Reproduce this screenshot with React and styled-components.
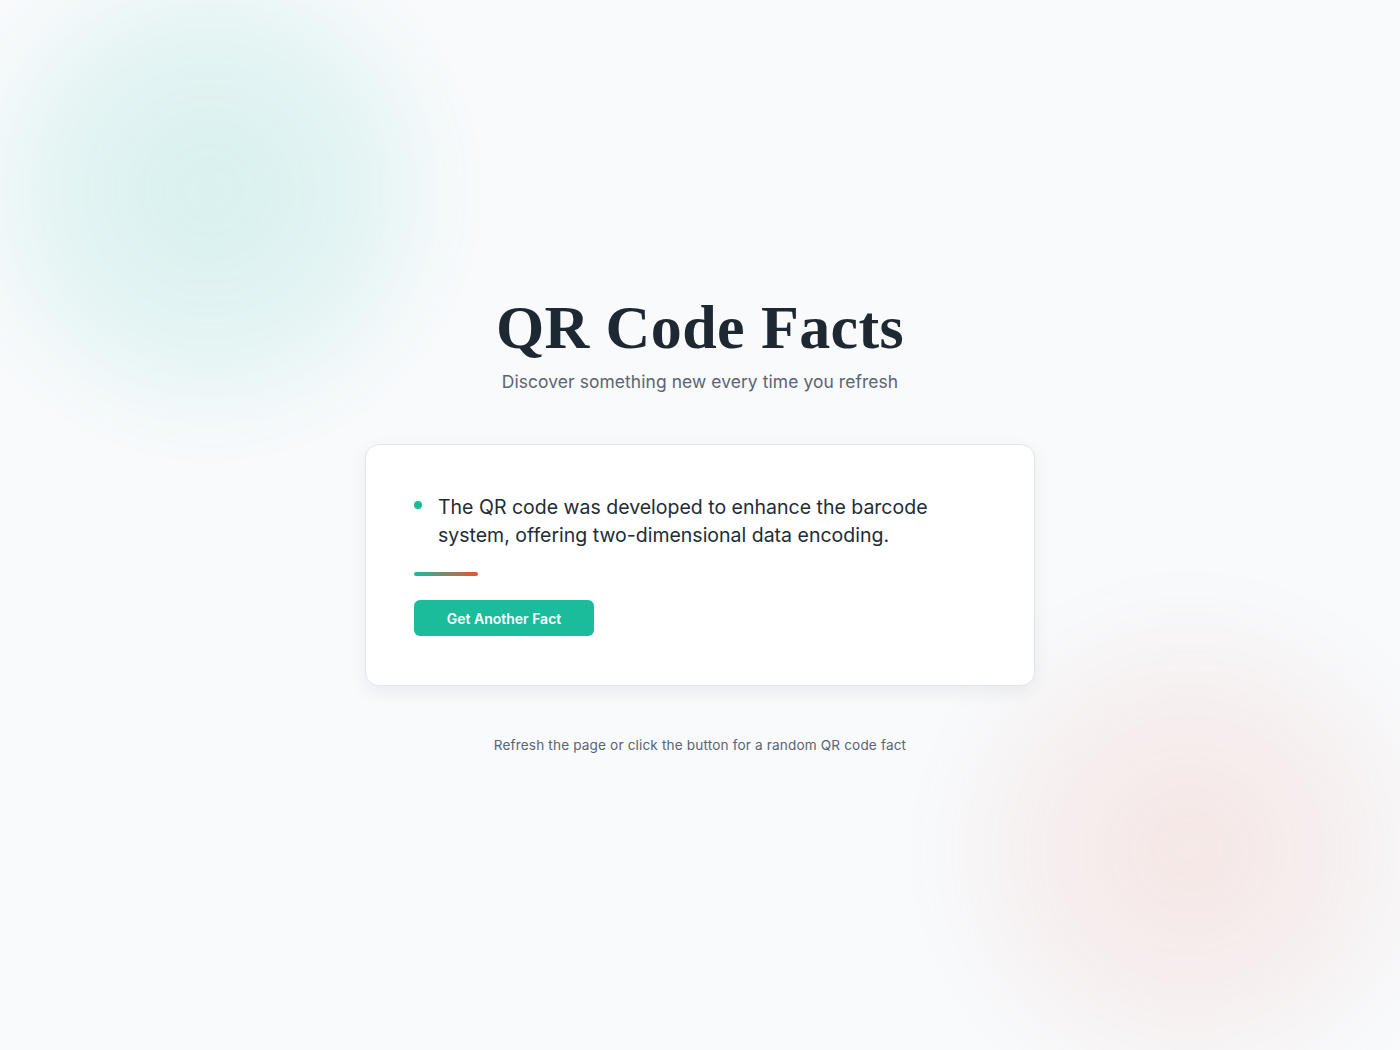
import React, { useState } from "react";
import styled, { createGlobalStyle } from "styled-components";

const facts = [
  "The QR code was developed to enhance the barcode system, offering two-dimensional data encoding.",
  "QR stands for Quick Response, a name chosen for how fast the code can be read.",
  "A single QR code can hold up to 7,089 numeric characters.",
  "QR codes can still be read when up to 30% of the code is damaged.",
];

function App() {
  const [index, setIndex] = useState(0);

  // 다른 사실 고르기
  const nextFact = () => {
    let next = index;
    while (next === index && facts.length > 1) {
      next = Math.floor(Math.random() * facts.length);
    }
    setIndex(next);
  };

  return (
    <>
      <GlobalStyle />
      <Page>
        <BlobTeal />
        <BlobRose />
        <Content>
          <Title>QR Code Facts</Title>
          <Subtitle>Discover something new every time you refresh</Subtitle>
          <Card>
            <FactRow>
              <Dot />
              <FactText>{facts[index]}</FactText>
            </FactRow>
            <Accent />
            <Button onClick={nextFact}>Get Another Fact</Button>
          </Card>
          <Footnote>
            Refresh the page or click the button for a random QR code fact
          </Footnote>
        </Content>
      </Page>
    </>
  );
}

export default App;

const GlobalStyle = createGlobalStyle`
  * { box-sizing: border-box; }
  body {
    margin: 0;
    background: #f8fafc;
    font-family: "Inter", "Noto Sans", sans-serif;
    color: #1f2933;
  }
`;

const Page = styled.div`
  position: relative;
  min-height: 100vh;
  overflow: hidden;
  display: flex;
  align-items: center;
  justify-content: center;
  background: #f8fafc;
`;

const BlobTeal = styled.div`
  position: absolute;
  left: -50px;
  top: -70px;
  width: 520px;
  height: 520px;
  border-radius: 50%;
  background: radial-gradient(
    circle,
    rgba(26, 188, 156, 0.14) 0%,
    rgba(26, 188, 156, 0.09) 40%,
    rgba(26, 188, 156, 0) 70%
  );
  filter: blur(20px);
`;

const BlobRose = styled.div`
  position: absolute;
  left: 920px;
  top: 580px;
  width: 540px;
  height: 540px;
  border-radius: 50%;
  background: radial-gradient(
    circle,
    rgba(231, 106, 80, 0.13) 0%,
    rgba(231, 106, 80, 0.07) 40%,
    rgba(231, 106, 80, 0) 70%
  );
  filter: blur(20px);
`;

const Content = styled.div`
  position: relative;
  display: flex;
  flex-direction: column;
  align-items: center;
  width: 670px;
`;

const Title = styled.h1`
  margin: 0;
  font-family: "Liberation Serif", "DejaVu Serif", serif;
  font-weight: 700;
  font-size: 62px;
  line-height: 62px;
  letter-spacing: 0.4px;
  color: #1e2833;
`;

const Subtitle = styled.p`
  margin: 12px 0 0;
  font-size: 17.4px;
  line-height: 24px;
  letter-spacing: 0.1px;
  color: #5b6472;
`;

const Card = styled.div`
  width: 100%;
  margin-top: 50px;
  padding: 48px 48px 49px;
  background: #ffffff;
  border: 1px solid #e2e6ea;
  border-radius: 14px;
  box-shadow: 0 6px 18px rgba(30, 40, 51, 0.07);
`;

const FactRow = styled.div`
  display: flex;
  align-items: flex-start;
  gap: 16px;
`;

const Dot = styled.span`
  flex: none;
  width: 8px;
  height: 8px;
  margin-top: 8px;
  border-radius: 50%;
  background: #1abc9c;
`;

const FactText = styled.p`
  margin: 0;
  max-width: 510px;
  font-size: 19.5px;
  line-height: 28px;
  color: #222c36;
`;

const Accent = styled.div`
  width: 64px;
  height: 4px;
  margin-top: 23px;
  border-radius: 2px;
  background: linear-gradient(90deg, #1abc9c, #e8532f);
`;

const Button = styled.button`
  display: block;
  margin-top: 24px;
  width: 180px;
  height: 36px;
  border: none;
  border-radius: 6px;
  background: #1abc9c;
  color: #ffffff;
  font-family: inherit;
  font-size: 14px;
  font-weight: 600;
  cursor: pointer;

  &:hover {
    background: #17a98c;
  }
`;

const Footnote = styled.p`
  margin: 50px 0 0;
  font-size: 13.6px;
  line-height: 18px;
  letter-spacing: 0.15px;
  color: #5b6472;
`;
